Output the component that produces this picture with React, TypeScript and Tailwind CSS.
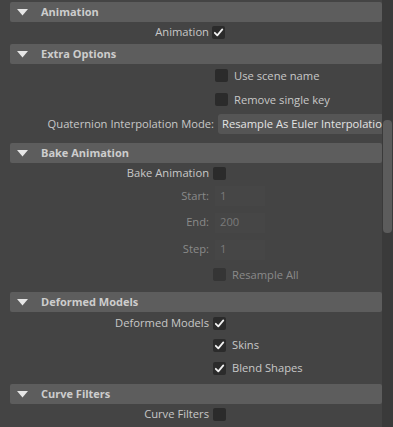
import React from 'react';

const FONT = { fontFamily: '"Open Sans", "Noto Sans", sans-serif' };

function Check({ checked = false, dim = false }: { checked?: boolean; dim?: boolean }) {
  return (
    <div className={`w-[13px] h-[13px] rounded-[2px] shrink-0 flex items-center justify-center ${dim ? 'bg-[#353535]' : 'bg-[#2b2b2b]'}`}>
      {checked && (
        <svg width="11" height="11" viewBox="0 0 11 11">
          <path d="M1.8 5.8 L4.3 8.3 L9.3 2.4" fill="none" stroke="#f2f2f2" strokeWidth="1.8" strokeLinecap="round" strokeLinejoin="round" />
        </svg>
      )}
    </div>
  );
}

function Header({ title }: { title: string }) {
  return (
    <div className="h-[20px] ml-[10px] bg-[#5d5d5d] rounded-[2px] flex items-center">
      <svg width="11" height="7" viewBox="0 0 11 7" className="ml-[7px]">
        <path d="M0 0 L11 0 L5.5 6.5 Z" fill="#e6e6e6" />
      </svg>
      <span className="ml-[13px] text-[11px] font-bold text-[#cdcdcd]">{title}</span>
    </div>
  );
}

// label column right edge at x=209
function Row({ h, label, dim, children }: { h: string; label?: string; dim?: boolean; children?: React.ReactNode }) {
  return (
    <div className={`${h} flex items-center`}>
      <div className={`w-[209px] shrink-0 text-right text-[11.2px] ${dim ? 'text-[#8a8a8a]' : 'text-[#c8c8c8]'}`}>{label}</div>
      <div className="ml-[4px] flex items-center">{children}</div>
    </div>
  );
}

function Field({ value }: { value: string }) {
  return (
    <div className="w-[50px] h-[20px] ml-[2px] bg-[#464646] flex items-center px-[5px] text-[11.2px] text-[#7a7a7a]">{value}</div>
  );
}

export default function App() {
  return (
    <div className="w-[393px] h-[427px] bg-[#444444] flex overflow-hidden select-none" style={FONT}>
      <div className="w-[382px] shrink-0 overflow-hidden pt-[2px]">
        <Header title="Animation" />
        <Row h="h-[20px]" label="Animation">
          <div className="-ml-[1px]"><Check checked /></div>
        </Row>

        <div className="mt-[2px]"><Header title="Extra Options" /></div>
        <Row h="h-[24px]">
          <div className="flex items-center ml-[2px] gap-[6px]"><Check /><span className="text-[11.2px] text-[#c8c8c8]">Use scene name</span></div>
        </Row>
        <Row h="h-[24px]">
          <div className="flex items-center ml-[2px] gap-[6px]"><Check /><span className="text-[11.2px] text-[#c8c8c8]">Remove single key</span></div>
        </Row>
        <div className="h-[24px] flex items-center">
          <div className="w-[214px] shrink-0 text-right text-[11.2px] text-[#c8c8c8]">Quaternion Interpolation Mode:</div>
          <div className="ml-[4px] h-[20px] w-[200px] shrink-0 bg-[#555555] rounded-l-[3px] flex items-center pl-[4px] text-[11.2px] text-[#e4e4e4] whitespace-nowrap">Resample As Euler Interpolation</div>
        </div>

        <div className="mt-[7px]"><Header title="Bake Animation" /></div>
        <Row h="h-[20px]" label="Bake Animation"><Check /></Row>
        <Row h="h-[26px]" label="Start:" dim><Field value="1" /></Row>
        <Row h="h-[27px]" label="End:" dim><Field value="200" /></Row>
        <Row h="h-[27px]" label="Step:" dim><Field value="1" /></Row>
        <Row h="h-[24px]">
          <div className="flex items-center gap-[6px]"><Check dim /><span className="text-[11.2px] text-[#8a8a8a]">Resample All</span></div>
        </Row>

        <div className="mt-[5px]"><Header title="Deformed Models" /></div>
        <Row h="h-[22px]" label="Deformed Models"><Check checked /></Row>
        <Row h="h-[23px]">
          <div className="flex items-center gap-[6px]"><Check checked /><span className="text-[11.2px] text-[#c8c8c8]">Skins</span></div>
        </Row>
        <Row h="h-[23px]">
          <div className="flex items-center gap-[6px]"><Check checked /><span className="text-[11.2px] text-[#c8c8c8]">Blend Shapes</span></div>
        </Row>

        <div className="mt-[4px]"><Header title="Curve Filters" /></div>
        <Row h="h-[20px]" label="Curve Filters"><Check /></Row>
      </div>
      <div className="flex-1 bg-[#3a3a3a] flex justify-center">
        <div className="w-[9px] h-[113px] mt-[120px] rounded-[4px] bg-[#5c5c5c]" />
      </div>
    </div>
  );
}
